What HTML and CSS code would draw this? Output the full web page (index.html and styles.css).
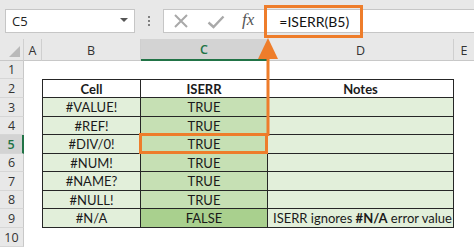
FILE: index.html
```html
<!DOCTYPE html>
<html>
<head>
<meta charset="utf-8">
<link rel="stylesheet" href="styles.css">
</head>
<body>
<div class="app">
  <div class="toolbar">
    <div class="namebox"><span class="name">C5</span><span class="caret"></span></div>
    <div class="dots"><i></i><i></i><i></i></div>
    <div class="fbar">
      <svg class="ico-x" width="16" height="16" viewBox="0 0 16 16"><path d="M2 2 L14 14 M14 2 L2 14" stroke="#a9a9a9" stroke-width="2" fill="none"/></svg>
      <svg class="ico-check" width="18" height="14" viewBox="0 0 18 14"><path d="M1.5 7.5 L6.5 12 L16.5 1.5" stroke="#a9a9a9" stroke-width="2.4" fill="none"/></svg>
      <span class="fx">fx</span>
      <span class="formula">=ISERR(B5)</span>
    </div>
  </div>
  <div class="sheet">
    <div class="corner"><span class="tri"></span></div>
    <div class="colh">A</div>
    <div class="colh">B</div>
    <div class="colh sel">C</div>
    <div class="colh">D</div>
    <div class="colh last">E</div>

    <div class="rowh">1</div><div class="c"></div><div class="c"></div><div class="c"></div><div class="c"></div><div class="c"></div>

    <div class="rowh">2</div><div class="c"></div>
    <div class="t th tl">Cell</div><div class="t th">ISERR</div><div class="t th">Notes</div><div class="c"></div>

    <div class="rowh">3</div><div class="c"></div>
    <div class="t b tl">#VALUE!</div><div class="t m">TRUE</div><div class="t n"></div><div class="c"></div>

    <div class="rowh">4</div><div class="c"></div>
    <div class="t b tl">#REF!</div><div class="t m">TRUE</div><div class="t n"></div><div class="c"></div>

    <div class="rowh selr">5</div><div class="c"></div>
    <div class="t b tl">#DIV/0!</div><div class="t m hl">TRUE</div><div class="t n"></div><div class="c"></div>

    <div class="rowh">6</div><div class="c"></div>
    <div class="t b tl">#NUM!</div><div class="t m">TRUE</div><div class="t n"></div><div class="c"></div>

    <div class="rowh">7</div><div class="c"></div>
    <div class="t b tl">#NAME?</div><div class="t m">TRUE</div><div class="t n"></div><div class="c"></div>

    <div class="rowh">8</div><div class="c"></div>
    <div class="t b tl">#NULL!</div><div class="t m">TRUE</div><div class="t n"></div><div class="c"></div>

    <div class="rowh">9</div><div class="c"></div>
    <div class="t b tl">#N/A</div><div class="t f">FALSE</div><div class="t n note"><span>ISERR ignores <b>#N/A</b> error value</span></div><div class="c"></div>

    <div class="rowh">10</div><div class="c"></div><div class="c"></div><div class="c"></div><div class="c"></div><div class="c"></div>
  </div>
  <svg class="arrow" width="24" height="98" viewBox="0 0 24 98"><polygon points="12,0 22,21 2,21" fill="#ee7d2b"/><rect x="10.5" y="19" width="3" height="79" fill="#ee7d2b"/></svg>
</div>
</body>
</html>
```
FILE: styles.css
```css
* { box-sizing: border-box; margin: 0; padding: 0; }
html, body { width: 474px; height: 247px; overflow: hidden; background: #fff; }
.app { position: relative; width: 474px; height: 247px; font-family: Lato, "Liberation Sans", sans-serif; }

.toolbar { height: 39px; background: #e8e8e8; display: flex; align-items: flex-start; padding-top: 9px; }
.namebox { margin-left: 5px; width: 130px; height: 24px; background: #fff; border: 1px solid #c6c6c6; display: flex; align-items: center; justify-content: space-between; padding: 0 6px 0 6px; }
.name { font-family: "Open Sans", sans-serif; font-size: 13px; color: #222; }
.caret { width: 0; height: 0; border-left: 4px solid transparent; border-right: 4px solid transparent; border-top: 4px solid #555; margin-top: -3px; }
.dots { width: 28px; height: 24px; display: flex; flex-direction: column; align-items: center; justify-content: center; gap: 2px; }
.dots i { display: block; width: 2px; height: 2px; background: #808080; }
.fbar { flex: 1; height: 24px; background: #fff; border: 1px solid #c6c6c6; border-right: none; display: flex; align-items: center; padding-left: 9px; }
.ico-x { margin-right: 18px; }
.ico-check { margin-right: 17px; margin-top: 1px; }
.fx { font-family: "Liberation Serif", serif; font-style: italic; font-size: 17px; color: #555; margin-top: -2px; }
.formula { position: relative; margin-left: 25px; font-size: 14px; color: #111; }
.formula::after { content: ""; position: absolute; left: -15px; right: -14px; top: -8px; bottom: -8px; border: 3px solid #ee7d2b; }

.sheet { display: grid; grid-template-columns: 24px 18px 99px 127px 186px 20px; grid-template-rows: 22px 18px 19px 19px 18px 19px 18px 19px 18px 19px 19px; }
.corner { background: #e8e8e8; border-right: 1px solid #d0d0d0; border-bottom: 1px solid #c8c8c8; position: relative; }
.tri { position: absolute; right: 3px; bottom: 3px; width: 0; height: 0; border-left: 11px solid transparent; border-bottom: 11px solid #b9b9b9; }
.colh { background: #e8e8e8; border-right: 1px solid #cfcfcf; border-bottom: 1px solid #c8c8c8; font-family: "Open Sans", sans-serif; font-size: 12.5px; color: #333; display: flex; align-items: center; justify-content: center; padding-top: 1px; }
.colh.last { border-right: none; }
.colh.sel { background: #d3d3d3; color: #217346; font-weight: 600; border-bottom: 2px solid #217346; }
.rowh { background: #e8e8e8; border-right: 1px solid #c8c8c8; border-bottom: 1px solid #d6d6d6; font-family: "Open Sans", sans-serif; font-size: 12.5px; color: #333; display: flex; align-items: center; justify-content: center; }
.rowh.selr { background: #d3d3d3; color: #217346; font-weight: 600; border-right: 2px solid #217346; }
.c { background: #fff; }
.t { border-right: 1px solid #262626; border-bottom: 1px solid #262626; display: flex; align-items: center; justify-content: center; font-size: 13px; color: #1a1a1a; }
.tl { border-left: 1px solid #262626; }
.th { border-top: 1px solid #262626; font-weight: 700; background: #fff; }
.b { background: #e2efda; }
.m { background: #c6e0b4; }
.f { background: #a9d08e; }
.n { background: #e2efda; }
.note { justify-content: flex-start; padding-left: 5px; white-space: nowrap; }
.hl { position: relative; }
.hl::after { content: ""; position: absolute; left: -2px; right: -1px; top: -2px; bottom: -1px; border: 3px solid #ee7d2b; }
.arrow { position: absolute; left: 256px; top: 38px; }
```
